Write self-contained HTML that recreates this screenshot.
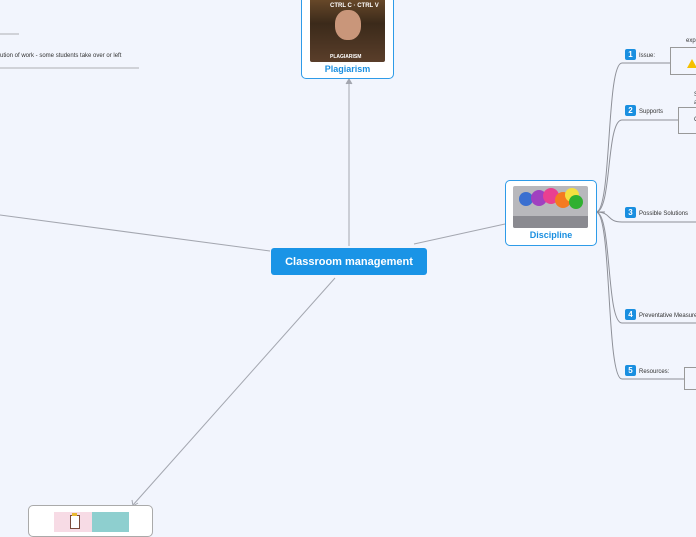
<!DOCTYPE html>
<html><head><meta charset="utf-8"><style>
html,body{margin:0;padding:0;width:696px;height:520px;overflow:hidden;background:#f2f5fd;font-family:"Liberation Sans",sans-serif;}
.abs{position:absolute}
.t{position:absolute;font-size:6px;color:#333;white-space:nowrap}
.n{position:absolute;width:11px;height:11px;background:#1a8fe0;border-radius:2px;color:#fff;font-size:8px;font-weight:bold;text-align:center;line-height:11px}
</style></head><body>
<svg class="abs" width="696" height="520" style="left:0;top:0" fill="none" stroke="#a4a7b0" stroke-width="1">
<line x1="0" y1="215" x2="270" y2="251"/>
<line x1="349" y1="246" x2="349" y2="80"/>
<path d="M346 84 L349 79 L352 84" fill="#a4a7b0"/>
<line x1="414" y1="244" x2="505" y2="224"/>
<line x1="335" y1="278" x2="133" y2="505"/>
<path d="M132 500 L133 506 L138 503" stroke-width="1"/>
<line x1="0" y1="34" x2="19" y2="34" stroke-width="1.5" stroke="#c4c6cc"/>
<line x1="0" y1="68" x2="139" y2="68" stroke-width="1.5" stroke="#c4c6cc"/>
<g stroke="#8e9098">
<path d="M596 212 C612 212,606 63,622 63 L670 63"/>
<path d="M596 212 C612 212,606 120,622 120 L678 120"/>
<path d="M596 212 C612 212,606 222,622 222 L696 222"/>
<path d="M596 212 C612 212,606 323,622 323 L696 323"/>
<path d="M596 212 C612 212,606 379,622 379 L684 379"/>
<path d="M596 212 L605 212"/>
</g>
<rect x="670.5" y="47.5" width="40" height="27" stroke="#999"/>
<rect x="678.5" y="107.5" width="30" height="26" stroke="#999"/>
<rect x="684.5" y="367.5" width="30" height="22" stroke="#999"/>
</svg>
<div class="t" style="left:0px;top:53px">ution of work - some students take over or left</div>
<div class="t" style="left:686px;top:38px">exp</div>
<div class="abs" style="left:687px;top:59px;width:0;height:0;border-left:5px solid transparent;border-right:5px solid transparent;border-bottom:9px solid #f5c000"></div>
<div class="t" style="left:694px;top:92px">S</div>
<div class="t" style="left:694px;top:100px">a</div>
<div class="t" style="left:694px;top:117px">C</div>
<div class="n" style="left:625px;top:49px">1</div><div class="t" style="left:639px;top:53px">Issue:</div>
<div class="n" style="left:625px;top:105px">2</div><div class="t" style="left:639px;top:109px">Supports</div>
<div class="n" style="left:625px;top:207px">3</div><div class="t" style="left:639px;top:211px">Possible Solutions</div>
<div class="n" style="left:625px;top:309px">4</div><div class="t" style="left:639px;top:313px">Preventative Measures</div>
<div class="n" style="left:625px;top:365px">5</div><div class="t" style="left:639px;top:369px">Resources:</div>
<div class="abs" style="left:271px;top:248px;width:156px;height:27px;background:#1a94e6;border-radius:3px;color:#fff;font-weight:bold;font-size:11px;text-align:center;line-height:28px">Classroom management</div>
<div class="abs" style="left:301px;top:-5px;width:91px;height:82px;background:#fff;border:1.5px solid #2e9be8;border-radius:5px">
<div class="abs" style="left:8px;top:2px;width:75px;height:64px;background:linear-gradient(#6a4a2a,#3b2a1a 40%,#5a3e2a);border-radius:2px">
<div class="abs" style="left:25px;top:12px;width:26px;height:30px;background:#c9967a;border-radius:45%"></div>
<div class="abs" style="left:20px;top:5px;color:#fff;font-size:6px;font-weight:bold">CTRL C · CTRL V</div>
<div class="abs" style="left:20px;top:56px;color:#fff;font-size:5px;font-weight:bold">PLAGIARISM</div></div>
<div class="abs" style="left:0px;top:68px;width:91px;text-align:center;color:#1a8fe0;font-weight:bold;font-size:9px">Plagiarism</div></div>
<div class="abs" style="left:505px;top:180px;width:90px;height:64px;background:#fff;border:1.5px solid #2e9be8;border-radius:5px">
<div class="abs" style="left:7px;top:5px;width:75px;height:42px;background:#b8b8bc;border-radius:2px;overflow:hidden">
<div class="abs" style="left:6px;top:6px;width:14px;height:14px;background:#3a6fd0;border-radius:50%"></div>
<div class="abs" style="left:18px;top:4px;width:16px;height:16px;background:#a040c0;border-radius:50%"></div>
<div class="abs" style="left:30px;top:2px;width:16px;height:16px;background:#e94090;border-radius:50%"></div>
<div class="abs" style="left:42px;top:6px;width:16px;height:16px;background:#f57a20;border-radius:50%"></div>
<div class="abs" style="left:52px;top:2px;width:14px;height:14px;background:#f5e040;border-radius:50%"></div>
<div class="abs" style="left:56px;top:9px;width:14px;height:14px;background:#30b030;border-radius:50%"></div>
<div class="abs" style="left:0px;top:30px;width:75px;height:12px;background:#8a8a90"></div></div>
<div class="abs" style="left:0px;top:49px;width:90px;text-align:center;color:#1a8fe0;font-weight:bold;font-size:9px">Discipline</div></div>
<div class="abs" style="left:28px;top:505px;width:123px;height:30px;background:#fff;border:1px solid #aaa;border-radius:5px">
<div class="abs" style="left:25px;top:6px;width:38px;height:20px;background:#f7dbe5"></div>
<div class="abs" style="left:63px;top:6px;width:37px;height:20px;background:#8ecfcf"></div>
<div class="abs" style="left:41px;top:9px;width:8px;height:12px;border:1px solid #7a4a3a;background:#fff"></div>
<div class="abs" style="left:43px;top:7px;width:5px;height:3px;background:#e8b830"></div></div>
</body></html>
